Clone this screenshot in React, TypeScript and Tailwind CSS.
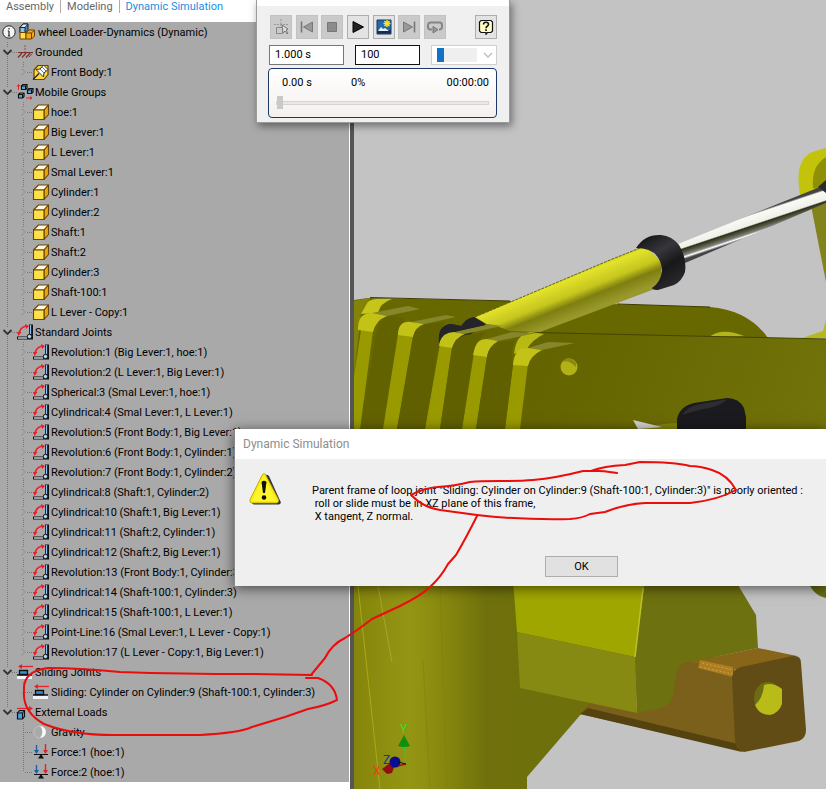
import React from 'react';

type IconName = 'ground' | 'pinned' | 'groups' | 'cube' | 'joint' | 'sliding' | 'loads' | 'gravity' | 'force' | 'assembly';

function TreeIcon({ name }: { name: IconName }) {
  return (
    <svg className="h-4 w-4 shrink-0 overflow-visible" viewBox="0 0 16 16" aria-hidden="true">
      {name === 'cube' && (
        <g stroke="#6b4300" strokeWidth="1.1" strokeLinejoin="round">
          <path d="M.5 6 5.500 1H15.500l-4.500 5z" fill="#fffbe0" />
          <path d="M11 6 15.500 1v9.500L11 15.500z" fill="#e5a414" />
          <path d="M.5 6H11v9.500H.5z" fill="#ffdf4a" />
        </g>
      )}
      {name === 'pinned' && (
        <g strokeLinejoin="round">
          <path d="M1 6 5 1.500h10V10.500L11 15.500H1z" fill="#ffd83a" stroke="#6b4300" strokeWidth="1.200" />
          <path d="M0 15.500 6 9.500" stroke="#222" strokeWidth="1.300" />
          <path d="m3 5.500 4-.5L10.500 1l4.500 4.500L11 9l-.5 4z" fill="#fafafa" stroke="#333" />
          <path d="m7 5 4 4M9 3l4.500 4.500" stroke="#777" />
        </g>
      )}
      {name === 'assembly' && (
        <g stroke="#222" strokeLinejoin="round">
          <path d="M1 3.500 4 0h5v5.500L6 8.500H1z" fill="#3c8ac6" />
          <path d="M1 3.500 4 0h5L6 3.500z" fill="#d8ecf8" />
          <path d="M1 3.500h5v5H1z" fill="#8cc3ea" />
          <path d="M1 8.500h6V15H1z" fill="#ffe04a" stroke="#6b4300" />
          <path d="m7 9 3-3h5.500v6l-3 3H7z" fill="#f5a91c" stroke="#6b4300" />
          <path d="M7 9h5.500l3-3m-3 3v6" fill="none" stroke="#6b4300" />
        </g>
      )}
      {name === 'ground' && (
        <g stroke="#7a3030" fill="none">
          <path d="M8 1v7" stroke="#8a5555" strokeDasharray="2 1" />
          <path d="M1 8.500h15M5 9l-4 4.500M9 9l-4 4.500M13 9l-4 4.500" strokeWidth="1.200" />
          <path d="M15 9.500 12 13" />
        </g>
      )}
      {name === 'groups' && (
        <g stroke="#111" strokeLinejoin="round" fill="#5aa7dc">
          <path d="M4.500 2 6 .5h4V4L8.500 5.500h-4zM10.500 6 12 4.500h4V8l-1.500 1.500h-4zM1.500 10.500 3 9h4v3.500L5.500 14h-4z" strokeWidth="1.200" />
          <path d="M4.500 2h4L10 .5M8.500 2v3.500M10.500 6h4L16 4.500M14.500 6v3.500M1.500 10.500h4L7 9m-1.500 1.500V14" fill="none" />
          <path d="M1.500 6V1M0 2.500 1.500.5 3 2.500M9 14h6m-2-1.500 2 1.500-2 1.500" stroke="#e3222c" fill="none" />
        </g>
      )}
      {name === 'joint' && (
        <g>
          <path d="M12 .5h4V15.500H0V12.500h12z" fill="#111" />
          <path d="M13.500 1v9.500" stroke="#8cc0f4" strokeWidth="1.300" />
          <path d="M1 14h9" stroke="#f0f4ff" strokeWidth="1.200" />
          <circle cx="12.500" cy="12.500" r="2.200" fill="#b4d8f2" stroke="#111" />
          <path d="M2 10C2.500 5.500 5 3 9 2" fill="none" stroke="#e8202c" strokeWidth="1.600" />
          <path d="M8 0 12 2 9 5zM0 8h4.500L1.500 12z" fill="#e8202c" />
        </g>
      )}
      {name === 'sliding' && (
        <g>
          <path d="M0 11h15v4H0z" fill="#f2f2fa" />
          <path d="M2.500 6.500h8v4h-8z" fill="#3f8fd0" stroke="#111" strokeWidth="1.300" />
          <path d="M0 11h15" stroke="#111" strokeWidth="1.500" />
          <path d="M3 2.500h13" stroke="#e3222c" strokeWidth="1.300" />
          <path d="M5 0v5L1 2.500z" fill="#e3222c" />
        </g>
      )}
      {name === 'loads' && (
        <g>
          <path d="m.5 9 2-2.500h5v6l-2 2.500h-5z" fill="#4aa0de" stroke="#111" strokeWidth="1.200" />
          <path d="M.5 9h5l2-2.500M5.500 9v6" fill="none" stroke="#111" />
          <path d="M0 4.500h13" stroke="#e3222c" strokeWidth="1.200" />
          <path d="m12 2 4 2.500L12 7z" fill="#e3222c" />
        </g>
      )}
      {name === 'gravity' && (
        <g>
          <path d="M7 2a6 6 0 1 1 0 12 9 9 0 0 0 0-12z" fill="#f8f8f8" />
          <path d="M7 2a6 6 0 0 0 0 12" fill="none" stroke="#dcdcdc" strokeDasharray="1 1" />
        </g>
      )}
      {name === 'force' && (
        <g>
          <path d="M1 10.500h14" stroke="#111" />
          <path d="m8 10 3 4.500H5z" fill="#111" />
          <path d="M3.500 1v6" stroke="#1c5fa8" strokeWidth="1.400" />
          <path d="M1 6h5L3.500 10z" fill="#1c5fa8" />
          <path d="M12.500 0v6" stroke="#e3222c" strokeWidth="1.400" />
          <path d="M10 6h5l-2.500 4z" fill="#e3222c" />
        </g>
      )}
    </svg>
  );
}

type Leaf = { icon: IconName; label: string; expandable?: boolean };
type Group = { icon: IconName; label: string; items: Leaf[] };

const part = (label: string): Leaf => ({ icon: 'cube', label, expandable: true });
const joint = (label: string): Leaf => ({ icon: 'joint', label, expandable: true });

const groups: Group[] = [
  { icon: 'ground', label: 'Grounded', items: [{ icon: 'pinned', label: 'Front Body:1', expandable: true }] },
  {
    icon: 'groups',
    label: 'Mobile Groups',
    items: ['hoe:1', 'Big Lever:1', 'L Lever:1', 'Smal Lever:1', 'Cylinder:1', 'Cylinder:2', 'Shaft:1', 'Shaft:2', 'Cylinder:3', 'Shaft-100:1', 'L Lever - Copy:1'].map(part),
  },
  {
    icon: 'joint',
    label: 'Standard Joints',
    items: [
      'Revolution:1 (Big Lever:1, hoe:1)',
      'Revolution:2 (L Lever:1, Big Lever:1)',
      'Spherical:3 (Smal Lever:1, hoe:1)',
      'Cylindrical:4 (Smal Lever:1, L Lever:1)',
      'Revolution:5 (Front Body:1, Big Lever:1)',
      'Revolution:6 (Front Body:1, Cylinder:1)',
      'Revolution:7 (Front Body:1, Cylinder:2)',
      'Cylindrical:8 (Shaft:1, Cylinder:2)',
      'Cylindrical:10 (Shaft:1, Big Lever:1)',
      'Cylindrical:11 (Shaft:2, Cylinder:1)',
      'Cylindrical:12 (Shaft:2, Big Lever:1)',
      'Revolution:13 (Front Body:1, Cylinder:3)',
      'Cylindrical:14 (Shaft-100:1, Cylinder:3)',
      'Cylindrical:15 (Shaft-100:1, L Lever:1)',
      'Point-Line:16 (Smal Lever:1, L Lever - Copy:1)',
      'Revolution:17 (L Lever - Copy:1, Big Lever:1)',
    ].map(joint),
  },
  { icon: 'sliding', label: 'Sliding Joints', items: [{ icon: 'sliding', label: 'Sliding: Cylinder on Cylinder:9 (Shaft-100:1, Cylinder:3)' }] },
  {
    icon: 'loads',
    label: 'External Loads',
    items: [
      { icon: 'gravity', label: 'Gravity' },
      { icon: 'force', label: 'Force:1 (hoe:1)' },
      { icon: 'force', label: 'Force:2 (hoe:1)' },
    ],
  },
];

function ModelTree() {
  return (
    <ul className="mr-px bg-[#a9a9a9]" aria-label="Model browser">
      <li className="flex h-5 items-center gap-[3px] pl-[2px]">
        <svg className="h-[14px] w-[14px] shrink-0" viewBox="0 0 14 14" aria-hidden="true">
          <circle cx="7" cy="7" r="6.200" fill="#f4f4f4" stroke="#222" />
          <path d="M7 3v1.500M7 6v5M5.800 6H7m-1.200 5h2.400" stroke="#222" strokeWidth="1.200" />
        </svg>
        <TreeIcon name="assembly" />
        <span className="pt-[2px]">wheel Loader-Dynamics (Dynamic)</span>
      </li>
      {groups.map((group, g) => {
        const lastGroup = g === groups.length - 1;
        return (
          <li key={group.label}>
            <div className="flex h-5 items-center">
              <button type="button" className="h-5 w-[17px] shrink-0" aria-label={'Collapse ' + group.label}>
                <svg className="h-5 w-[17px]" viewBox="0 0 17 20" fill="none">
                  <path d={lastGroup ? 'M7.500 0v6' : 'M7.500 0v6M7.500 14v6'} stroke="#777" strokeDasharray="1 1" />
                  <path d="M12 10.500h5" stroke="#777" strokeDasharray="1 1" />
                  <path d="m3.500 8 4 4 4-4" stroke="#333" strokeWidth="1.800" />
                </svg>
              </button>
              <TreeIcon name={group.icon} />
              <span className="pl-[2px] pt-[2px]">{group.label}</span>
            </div>
            <ul>
              {group.items.map((item, i) => (
                <li key={item.label} className="flex h-5 items-center">
                  <svg className="h-5 w-[33px] shrink-0" viewBox="0 0 33 20" fill="none" aria-hidden="true">
                    {!lastGroup && <path d="M7.500 0v20" stroke="#777" strokeDasharray="1 1" />}
                    <path d={i === group.items.length - 1 ? 'M23.500 0v10' : 'M23.500 0v20'} stroke="#777" strokeDasharray="1 1" />
                    <path d="M25 10.500h8" stroke="#777" strokeDasharray="1 1" />
                    {item.expandable && <path d="M20 5h7v10h-7z" fill="#a9a9a9" />}
                    {item.expandable && <path d="m21.500 6.500 3.500 3.500-3.500 3.500" stroke="#989898" strokeWidth="1.300" />}
                  </svg>
                  <TreeIcon name={item.icon} />
                  <span className="whitespace-nowrap pl-[2px] pt-[2px]">{item.label}</span>
                </li>
              ))}
            </ul>
          </li>
        );
      })}
    </ul>
  );
}

function ToolButton({ label, active, children }: { label: string; active?: boolean; children: React.ReactNode }) {
  return (
    <button
      type="button"
      aria-label={label}
      className={
        active
          ? 'flex h-6 w-[22px] items-center justify-center border border-[#adadad] bg-[#e3e3e3]'
          : 'flex h-6 w-[22px] items-center justify-center border border-[#c2c2c2] bg-[#cacaca]'
      }
    >
      <svg className="h-4 w-4 shrink-0" viewBox="0 0 16 16" fill="none" aria-hidden="true">
        {children}
      </svg>
    </button>
  );
}

function SimulationPlayer() {
  return (
    <section aria-label="Simulation player" className="absolute left-[256px] top-0 w-[254px] border border-t-0 border-[#9a9a9a] bg-[#f0f0f0] shadow-[2px_3px_8px_rgba(0,0,0,0.45)]">
      <div className="h-[6px] bg-white" />
      <div className="pb-1 pl-[11px] pr-3 pt-[9px]">
        <div className="flex items-center justify-between">
          <div className="flex w-[178px] justify-between pl-[2px]">
            <ToolButton label="Construction mode">
              <path d="M8 0v7M1 5.500h14" stroke="#999" strokeDasharray="2 1" />
              <path d="M3.500 8.500h6v6h-6z" stroke="#888" />
              <path d="m9 6 1 8 2-2 2 3 1-1-2-3 2-1z" fill="#ddd" stroke="#777" />
            </ToolButton>
            <ToolButton label="Rewind to start">
              <path d="M2.500 2.500v11" stroke="#777" strokeWidth="1.600" />
              <path d="M13.500 3v10L4.500 8z" fill="#999" stroke="#777" />
            </ToolButton>
            <ToolButton label="Stop">
              <path d="M3.500 3.500h9v9h-9z" fill="#8b8b8b" stroke="#777" />
            </ToolButton>
            <ToolButton label="Run simulation" active>
              <path d="m3 2.500 10.500 5.500L3 13.500z" fill="#222" stroke="#000" />
            </ToolButton>
            <ToolButton label="Screen refresh" active>
              <path d="M1 1h14v14H1z" fill="#2468ae" stroke="#16345e" />
              <path d="M1.500 11h13v3.500h-13z" fill="#152b50" />
              <path d="m2 12 3-4 2 2 2-1 4 3z" fill="#e6f0fa" />
              <path d="M11 1v7M7.500 4.500h7M8.500 2l5 5m0-5-5 5" stroke="#ffe326" strokeWidth="1.400" />
            </ToolButton>
            <ToolButton label="Go to end">
              <path d="M13.500 2.500v11" stroke="#777" strokeWidth="1.600" />
              <path d="M2.500 3v10l9-5z" fill="#999" stroke="#777" />
            </ToolButton>
            <ToolButton label="Continuous loop">
              <path d="M5 10.500H3A2.500 2.500 0 0 1 1 8V6a2.500 2.500 0 0 1 2.500-2.500h9A2.500 2.500 0 0 1 15 6v2a2.500 2.500 0 0 1-2.500 2.500H12" stroke="#858585" strokeWidth="2" />
              <path d="M6 7.500v6.500l5-3.250z" fill="#999" stroke="#777" />
            </ToolButton>
          </div>
          <ToolButton label="Help" active>
            <path d="M3 1.500h10l1.500 1.500v9L13 13.500H9.500L8 15.500V13.500H3L1.500 12V3z" fill="#fffbc4" stroke="#111" strokeWidth="1.200" />
            <path d="M5.500 5.500C5.500 2.500 10.500 2.500 10.500 5.500 10.500 7 8 7.200 8 9.200M8 10.300v1.600" stroke="#111" strokeWidth="1.600" />
          </ToolButton>
        </div>
        <div className="mt-[6px] flex h-5 items-stretch justify-between">
          <input aria-label="Final time" defaultValue="1.000 s" className="ml-px w-[75px] border border-[#777] bg-white px-[5px] outline-none" />
          <input aria-label="Images" defaultValue="100" className="w-[65px] border border-[#111] bg-white px-[5px] outline-none" />
          <div className="relative w-[66px]">
            <select aria-label="Filter" disabled className="h-full w-full appearance-none border border-[#cfcfcf] bg-white opacity-100">
              <option></option>
            </select>
            <span className="absolute left-[6px] top-[3px] h-[14px] w-10 border-l-[7px] border-[#1173c7] bg-[#efefef]" />
            <svg className="absolute right-1 top-[6px] h-2 w-[10px]" viewBox="0 0 10 8" fill="none" aria-hidden="true">
              <path d="m1 2 4 4 4-4" stroke="#bbb" strokeWidth="1.300" />
            </svg>
          </div>
        </div>
        <div className="mt-[3px] h-[50px] rounded border border-[#1d3767] bg-gradient-to-b from-white to-[#f5f0ee]">
          <div className="flex h-[27px] items-center pl-[13px] pr-[7px]">
            <output className="w-[69px]">0.00 s</output>
            <output className="flex-1">0%</output>
            <output>00:00:00</output>
          </div>
          <input
            type="range"
            aria-label="Simulation time"
            min={0}
            max={100}
            defaultValue={0}
            className="mx-[7px] block h-[14px] w-[213px] appearance-none bg-transparent [&::-webkit-slider-runnable-track]:h-1 [&::-webkit-slider-runnable-track]:border [&::-webkit-slider-runnable-track]:border-[#d4d4d4] [&::-webkit-slider-runnable-track]:bg-[#e8e8e8] [&::-webkit-slider-thumb]:-mt-[6px] [&::-webkit-slider-thumb]:h-[13px] [&::-webkit-slider-thumb]:w-[6px] [&::-webkit-slider-thumb]:appearance-none [&::-webkit-slider-thumb]:bg-[#c9c9c9]"
          />
        </div>
      </div>
    </section>
  );
}

function MessageDialog() {
  return (
    <div role="dialog" aria-labelledby="dialog-title" className="absolute left-[234px] right-0 top-[429px] h-[157px] border-l border-[#888] bg-[#efefef] shadow-[0_2px_12px_rgba(0,0,0,0.6)]">
      <h2 id="dialog-title" className="flex h-[30px] items-center bg-white pl-2 text-[12px] text-[#8d8d8d]">
        Dynamic Simulation
      </h2>
      <div className="flex pl-[14px] pt-[14px]">
        <svg className="h-8 w-8 shrink-0" viewBox="0 0 32 32" aria-hidden="true">
          <path d="M17 2 3 28q-1 3 2 3.500h25q3-1 1-4L20 3q-2-2-3-1z" fill="#34343c" />
          <path d="M13.500 1.500q1.500-2 3 0l13 25q1 3-2 3.500H3q-3-.500-2-3.500z" fill="#f8ec13" stroke="#b89c00" strokeWidth=".8" />
          <path d="M15 3 3 28h24z" fill="#fff62b" />
          <path d="M12.500 9q2.500-2.500 5 0L16 20h-2z" fill="#111" />
          <circle cx="15" cy="24.500" r="2.300" fill="#111" />
        </svg>
        <p className="whitespace-pre pl-[31px] pt-[11px] leading-[13px]">
          {'Parent frame of loop joint "Sliding: Cylinder on Cylinder:9 (Shaft-100:1, Cylinder:3)" is poorly oriented :\n roll or slide must be in XZ plane of this frame,\n X tangent, Z normal.'}
        </p>
      </div>
      <button type="button" className="ml-[310px] mt-[33px] block h-[21px] w-[73px] border border-[#adadad] bg-[#e1e1e1]">
        OK
      </button>
    </div>
  );
}

const arms = [
  { face: 'M354 429V376L361 330 373 331 360 429z', cap: 'M358 330C358 318 362 313 372 313L387 316Q376 320 373 332z', wedge: 'M372 313 408 306 420 309 387 316z' },
  { face: 'M383 429 398 334 413 336 397 429z', cap: 'M398 335C398 324 404 321 411 322L424 324Q415 327 413 337z', wedge: 'M411 322 446 315 456 317 424 324z' },
  { face: 'M425 429 440 344 452 347 440 429z', cap: 'M439 346C440 335 446 331 454 332L465 334Q455 338 452 348z', wedge: 'M454 332 488 324 502 326 465 334z' },
  { face: 'M462 429 474 353 487 356 476 429z', cap: 'M473 355C475 343 479 339 487 339L498 341Q488 347 487 357z', wedge: 'M487 339 512 332 536 333 498 341z' },
  { face: 'M505 429 513 363 528 364 520 429z', cap: 'M513 365C514 352 519 348 528 348L542 350Q530 356 528 366z', wedge: 'M528 348 548 342 575 343 542 350z' },
];

function Viewport() {
  return (
    <svg className="h-full w-full" viewBox="354 0 472 789" preserveAspectRatio="xMinYMin slice" role="img" aria-label="Wheel loader model">
      <defs>
        <linearGradient id="barrel" x1="560" y1="276" x2="576" y2="316" gradientUnits="userSpaceOnUse">
          <stop offset="0" stopColor="#b9b91c" />
          <stop offset=".15" stopColor="#e3e32c" />
          <stop offset=".5" stopColor="#c5c51e" />
          <stop offset=".7" stopColor="#7f7f10" />
          <stop offset="1" stopColor="#98982c" />
        </linearGradient>
        <linearGradient id="rod" x1="750" y1="214" x2="757" y2="235" gradientUnits="userSpaceOnUse">
          <stop offset="0" stopColor="#444" />
          <stop offset=".08" stopColor="#fafaf5" />
          <stop offset=".48" stopColor="#f0f0ea" />
          <stop offset=".54" stopColor="#2f301b" />
          <stop offset=".68" stopColor="#55563f" />
          <stop offset=".82" stopColor="#858585" />
          <stop offset=".9" stopColor="#fff" />
          <stop offset="1" stopColor="#444" />
        </linearGradient>
        <linearGradient id="trunk" x1="354" x2="530" y1="0" y2="0" gradientUnits="userSpaceOnUse">
          <stop offset="0" stopColor="#85850c" />
          <stop offset=".32" stopColor="#959514" />
          <stop offset=".5" stopColor="#88880f" />
          <stop offset=".75" stopColor="#70710c" />
          <stop offset="1" stopColor="#6e700c" />
        </linearGradient>
        <linearGradient id="plate" x1="560" x2="826" y1="340" y2="430" gradientUnits="userSpaceOnUse">
          <stop offset="0" stopColor="#646400" />
          <stop offset="1" stopColor="#73730b" />
        </linearGradient>
        <linearGradient id="ring" x1="645" y1="240" x2="675" y2="288" gradientUnits="userSpaceOnUse">
          <stop offset="0" stopColor="#1b1b1e" />
          <stop offset=".3" stopColor="#37373b" />
          <stop offset=".6" stopColor="#18181a" />
          <stop offset="1" stopColor="#2b2b2f" />
        </linearGradient>
      </defs>
      <path d="M354 0h472v789H354z" fill="#c3c3c3" />

      {/* far lever */}
      <path d="M808 190 826 180V282z" fill="#82831a" />
      <path d="M800 195Q794 160 812 152L826 148V194z" fill="#c3c30c" />
      <path d="M813 188Q811 166 826 157V192z" fill="#8f9005" />
      <path d="M826 320 823 331 802 338H826z" fill="#b5b91c" />

      {/* far side plate */}
      <path d="M354 429V300L368 298 510 301 612 304 710 307Q748 310 768 338L770 429z" fill="#686800" />
      <path d="M370 297.500 510 301M617 304 710 307" stroke="#3d3d00" />
      <path d="M709 337Q722 327 744 336z" fill="#b5b51b" />

      {/* hydraulic cylinder */}
      <path d="M438 345Q438 324 452 324L461 326Q466 318 474 317L486 324 462 340z" fill="#242429" />
      <path d="M678 244 820 187 826 189V203L685 263z" fill="url(#rod)" />
      <path d="M818 187 826 180V193z" fill="#2a2a30" />
      <path d="M475 317 610 260 645 246 662 262 660 287 580 317 540 332 510 331Q496 325 488 325z" fill="url(#barrel)" />
      <path d="M475 317 610 260 645 246" fill="none" stroke="#64640e" strokeDasharray="3 1" />
      <path d="M636 248Q645 234 661 235Q672 236 679 245Q687 258 685 272Q682 281 674 285L658 290Q653 290 652 288Q661 282 662 270Q660 248 636 248z" fill="url(#ring)" />

      {/* near side plate and arms */}
      <path d="M510 429 530 335 545 332 826 339V429z" fill="url(#plate)" />
      <path d="M535 332.500 826 339" stroke="#454500" />
      <path d="M360 314Q364 300 376 299H392Q380 303 378 313z" fill="#c6c61a" />
      <path d="M354 301 370 298 361 314 354 375z" fill="#83830a" />
      <path d="M514 354Q516 334 530 332L544 334Q532 340 527 349z" fill="#b9b913" />
      <path d="M376 335Q379 317 390 316L404 318 398 429H360z" fill="#626200" />
      {arms.map((arm) => (
        <g key={arm.face}>
          <path d={arm.wedge} fill="#86862a" />
          <path d={arm.face} fill="#999900" />
          <path d={arm.cap} fill="#c3c317" />
        </g>
      ))}
      <path d="M413 337Q415 328 424 325L445 322Q438 330 439 345L425 429H397z" fill="#606000" />
      <path d="M439 343Q437 326 450 324L462 326 466 321 474 322 486 325 454 332Q443 332 439 343z" fill="#242429" />
      <path d="M452 348Q455 338 465 335L487 332Q475 340 473 354L462 429H440z" fill="#606000" />
      <path d="M487 357Q488 347 498 342L515 340Q510 350 513 365L505 429H476z" fill="#606000" />
      <circle cx="569" cy="367" r="8.500" fill="#b2b216" />
      <path d="M562 362Q569 354 576 363V367Q568 359 562 362z" fill="#8a8a10" />

      {/* pin and gap behind the message window */}
      <path d="M640 429Q654 424 678 423V429z" fill="#85850b" />
      <path d="M633 420 662 427 638 429z" fill="#d2d2d2" />
      <path d="M677 429V419Q680 406 694 403L727 398Q739 398 744 408L746 417V429z" fill="#1b1b1f" />
      <path d="M682 415Q688 406 700 404L728 399Q720 407 699 410z" fill="#2c2c31" />

      {/* loader body */}
      <path d="M354 580H640V667L588 706 527 777V789H354z" fill="url(#trunk)" />
      <path d="M358 586 380 789" stroke="#a9aa19" fill="none" />
      <path d="M378 586 392 662" stroke="#a5a62b" fill="none" />
      <path d="M423 660 430 789M440 586 447 789M463 655 472 789" stroke="#7e7f0d" opacity=".5" fill="none" />
      <path d="M580 714 590 702 637 708 676 660 734 655 738 750z" fill="#7a601a" />
      <path d="M580 714 742 752 738 744 588 708z" fill="#55430f" />
      <path d="M645 580H735L756 615 758 648 696 661Q679 662 677 670L673 695Q671 704 661 708L637 713 634 655z" fill="#6e710f" />
      <path d="M513 580H645L635 657 517 632z" fill="#a0a600" />
      <path d="M643 588 635 657" stroke="#bdc22a" strokeWidth="1.500" />
      <path d="M517 632 635 657 637 713 520 688z" fill="#878a12" />

      {/* bracket */}
      <path d="M690 662 758 648 797 656 738 670z" fill="#87661a" />
      <path d="M700 660 733 667 733 677 698 668z" fill="#ad7d21" />
      <path d="M702 663 733 670M700 667 733 674" stroke="#d1a044" strokeDasharray="2 2" fill="none" />
      <path d="M732 677Q733 669 741 667L793 656Q801 655 801 663L806 730Q806 738 799 741L744 752Q735 750 735 740z" fill="#604c14" />
      <ellipse cx="768" cy="698" rx="14" ry="16" fill="#6b6c14" />
      <path d="M764 685Q773 682 782 689V704Q779 713 770 715Q759 715 755 705Q763 698 764 685z" fill="#b8bb18" />
      <path d="M808 580Q812 595 826 598V580z" fill="#666a12" />

      {/* axis triad */}
      <path d="M406 763 404 742" stroke="#38c838" fill="none" />
      <path d="m404 735 6 11q-6 2-12 0z" fill="#0f8f10" />
      <path d="M406 764 388 768" stroke="#a01212" strokeWidth="1.500" />
      <path d="m382 769 8-6 4 4-2 6-5 1z" fill="#930f0f" />
      <circle cx="395" cy="762" r="5.500" fill="#0c0c93" />
      <path d="M398 762 406 764" stroke="#111" />
      <g fontSize="12" fontFamily="Roboto, sans-serif">
        <text x="400" y="733" fill="#3ede20">Y</text>
        <text x="383" y="764" fill="#2432a8">Z</text>
        <text x="373" y="775" fill="#f23a10">X</text>
      </g>
    </svg>
  );
}

function RedMarkup() {
  return (
    <svg className="pointer-events-none absolute left-0 top-0 h-[789px] w-[826px]" viewBox="0 0 826 789" fill="none" stroke="#ec0c0c" strokeWidth="2" strokeLinecap="round" strokeLinejoin="round" aria-hidden="true">
      <path d="M617 473Q600 470 583 471Q556 478 533 480C510 482 488 480 470 482Q455 486 438 487Q424 488 411 495Q424 508 440 510L477 515Q520 520 570 519Q583 518 590 514L605 512Q625 504 645 503H690Q718 500 736 490Q728 475 712 470Q700 466 690 466Q674 462 640 462L625 465Q604 466 591 471" />
      <path d="M477 516Q466 538 456 555L448 564Q441 577 430 587Q422 595 400 606L372 619Q358 630 345 638Q332 644 325 658L311 675" />
      <path d="M306 678H318Q335 684 337 700Q325 706 308 709L285 717 252 727Q239 733 200 735H120Q75 736 44 724Q22 712 24 690Q23 671 48 668Q78 668 120 672Q180 674 250 674L312 675" />
    </svg>
  );
}

export default function App() {
  return (
    <main className="relative flex h-screen min-h-[789px] overflow-hidden bg-white font-[Roboto,'Noto_Sans',sans-serif] text-[11px] leading-5 text-black">
      <aside className="w-[350px] shrink-0">
        <nav className="flex h-[22px] items-start text-[#666]" aria-label="Browser tabs">
          <div className="flex h-[13px] items-center divide-x divide-[#b8a8a8] leading-[13px]">
            <button type="button" className="px-[6px]">Assembly</button>
            <button type="button" className="px-[6px]">Modeling</button>
            <button type="button" className="px-[6px] text-[#1b8de0]">Dynamic Simulation</button>
          </div>
        </nav>
        <ModelTree />
      </aside>
      <div className="w-1 shrink-0 bg-[#555]" />
      <div className="min-w-0 flex-1">
        <Viewport />
      </div>
      <SimulationPlayer />
      <MessageDialog />
      <RedMarkup />
    </main>
  );
}
